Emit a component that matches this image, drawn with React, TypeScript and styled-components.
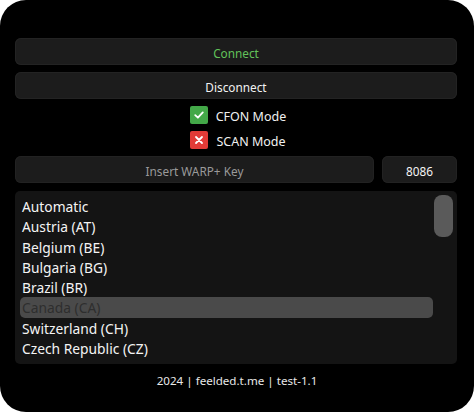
import React from "react";
import styled, { createGlobalStyle } from "styled-components";

const Global = createGlobalStyle`
  html, body { margin: 0; padding: 0; background: #ffffff; }
  body { width: 474px; height: 412px; overflow: hidden; font-family: "Noto Sans", "Open Sans", sans-serif; }
`;

const Window = styled.div`
  width: 474px;
  height: 412px;
  box-sizing: border-box;
  background: #000000;
  border-radius: 26px;
  padding: 38px 17px 0 15px;
  display: flex;
  flex-direction: column;
  gap: 7px;
`;

const Button = styled.div<{ $green?: boolean }>`
  height: 27px;
  box-sizing: border-box;
  padding-top: 2px;
  border-radius: 6px;
  background: #1c1c1c;
  box-shadow: inset 0 0 0 1px #232323;
  display: flex;
  align-items: center;
  justify-content: center;
  font-size: 11.8px;
  color: ${(p) => (p.$green ? "#62c25a" : "#f2f2f2")};
`;

const CheckRow = styled.div`
  height: 18px;
  display: flex;
  align-items: center;
  justify-content: center;
  gap: 8px;
  padding-left: 4px;
`;

const Box = styled.div<{ $on: boolean }>`
  width: 18px;
  height: 18px;
  border-radius: 2px;
  background: ${(p) => (p.$on ? "#43a848" : "#e23b37")};
  display: flex;
  align-items: center;
  justify-content: center;
`;

const CheckLabel = styled.span`
  font-size: 12.5px;
  color: #f0f0f0;
  white-space: nowrap;
  padding-top: 2px;
`;

const InputRow = styled.div`
  height: 27px;
  display: flex;
  gap: 8px;
`;

const Field = styled.div<{ $w?: number }>`
  ${(p) => (p.$w ? `width: ${p.$w}px;` : "flex: 1;")}
  box-sizing: border-box;
  padding-top: 2px;
  border-radius: 6px;
  background: #1c1c1c;
  box-shadow: inset 0 0 0 1px #222222;
  display: flex;
  align-items: center;
  justify-content: center;
  font-size: 11.8px;
  color: ${(p) => (p.$w ? "#f4f4f4" : "#9a9a9a")};
`;

const List = styled.div`
  height: 173px;
  margin-top: 1px;
  border-radius: 5px;
  background: #141414;
  display: flex;
  padding: 5px 4px 0 5px;
  box-sizing: border-box;
`;

const Items = styled.div`
  flex: 1;
  display: flex;
  flex-direction: column;
`;

const Item = styled.div<{ $sel?: boolean }>`
  height: 20.3px;
  box-sizing: border-box;
  padding: 1px 0 0 2px;
  line-height: 19.3px;
  border-radius: 5px;
  font-size: 13.8px;
  color: ${(p) => (p.$sel ? "#2e2e2e" : "#f4f4f4")};
  background: ${(p) => (p.$sel ? "#4a4a4a" : "transparent")};
  white-space: nowrap;
`;

const Track = styled.div`
  width: 20px;
  display: flex;
  justify-content: flex-end;
`;

const Thumb = styled.div`
  width: 19px;
  height: 42px;
  margin-top: -1px;
  border-radius: 8px;
  background: #5a5a5a;
`;

const Footer = styled.div`
  height: 16px;
  display: flex;
  align-items: center;
  justify-content: center;
  font-size: 11.6px;
  color: #e8e8e8;
  padding-left: 2px;
  margin-top: 1px;
`;

const countries = [
  "Automatic",
  "Austria (AT)",
  "Belgium (BE)",
  "Bulgaria (BG)",
  "Brazil (BR)",
  "Canada (CA)",
  "Switzerland (CH)",
  "Czech Republic (CZ)",
];

export default function App() {
  return (
    <>
      <Global />
      <Window>
        <Button $green>Connect</Button>
        <Button>Disconnect</Button>
        <CheckRow>
          <Box $on>
            <svg width="12" height="12" viewBox="0 0 12 12">
              <path d="M2.2 6.2 L4.9 8.7 L9.8 3.4" fill="none" stroke="#fff" strokeWidth="1.8" strokeLinecap="round" strokeLinejoin="round" />
            </svg>
          </Box>
          <CheckLabel>CFON Mode</CheckLabel>
        </CheckRow>
        <CheckRow>
          <Box $on={false}>
            <svg width="10" height="10" viewBox="0 0 10 10">
              <path d="M2 2 L8 8 M8 2 L2 8" fill="none" stroke="#fff" strokeWidth="1.8" strokeLinecap="round" />
            </svg>
          </Box>
          <CheckLabel>SCAN Mode</CheckLabel>
        </CheckRow>
        <InputRow>
          <Field>Insert WARP+ Key</Field>
          <Field $w={75}>8086</Field>
        </InputRow>
        <List>
          <Items>
            {countries.map((c) => (
              <Item key={c} $sel={c === "Canada (CA)"}>
                {c}
              </Item>
            ))}
          </Items>
          <Track>
            <Thumb />
          </Track>
        </List>
        <Footer>2024 | feelded.t.me | test-1.1</Footer>
      </Window>
    </>
  );
}
